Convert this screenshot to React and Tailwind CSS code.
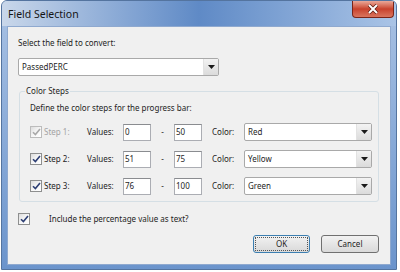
import { useState } from "react";

function Arrow() {
  return (
    <svg width="7" height="4" viewBox="0 0 7 4">
      <path d="M0 0 H7 L3.5 4 Z" fill="#1a1a1a" />
    </svg>
  );
}

function Check({ checked, disabled, onClick }) {
  return (
    <button
      type="button"
      onClick={onClick}
      className={
        "w-[12px] h-[12px] flex items-center justify-center border bg-linear-to-br from-[#dcdcdc] via-[#f6f6f6] to-[#ffffff] " +
        (disabled ? "border-[#bcbcbc]" : "border-[#8e8f8f]")
      }
    >
      {checked && (
        <svg width="9" height="8" viewBox="0 0 9 8">
          <path
            d="M1 4.2 L3.4 6.6 L8 1"
            fill="none"
            stroke={disabled ? "#a9a9a9" : "#2e3f74"}
            strokeWidth="1.6"
          />
        </svg>
      )}
    </button>
  );
}

function Combo({ value, width }) {
  return (
    <div
      className={
        "h-[18px] flex items-stretch border border-[#a9a9a9] rounded-[2px] bg-white " + width
      }
    >
      <div className="flex-1 flex items-center pl-[3px] text-[#1e1e1e]">{value}</div>
      <div className="w-[15px] flex items-center justify-center border-l border-[#e2e2e2] bg-linear-to-b from-[#f3f3f3] to-[#dbdbdb]">
        <Arrow />
      </div>
    </div>
  );
}

function ValueBox({ value }) {
  return (
    <div className="w-[28px] h-[17px] flex items-center pl-[1px] border border-[#abadb3] border-t-[#8a8c90] bg-white text-[#1e1e1e]">
      {value}
    </div>
  );
}

function StepRow({ step, from, to, color, disabled }) {
  const [on, setOn] = useState(true);
  return (
    <div className="h-[18px] flex items-center">
      <Check checked={on} disabled={disabled} onClick={() => !disabled && setOn(!on)} />
      <span className={"ml-[2px] w-[43px] " + (disabled ? "text-[#a3a3a3]" : "text-[#1e1e1e]")}>
        Step {step}:
      </span>
      <span className="w-[36px]">Values:</span>
      <ValueBox value={from} />
      <span className="w-[23px] text-center">-</span>
      <ValueBox value={to} />
      <span className="ml-[10px] w-[32px]">Color:</span>
      <Combo value={color} width="w-[128px]" />
    </div>
  );
}

export default function App() {
  const [includeText, setIncludeText] = useState(true);

  return (
    <div className="w-[400px] h-[272px] bg-white font-['Noto_Sans',sans-serif] text-[8px] leading-[12px] text-[#1e1e1e]">
      <div className="ml-[1px] w-[396px] h-[270px] flex flex-col rounded-t-[6px] border border-[#54749f] bg-linear-to-b from-[#a9c2e4] to-[#6b94cc] overflow-hidden">
        {/* TITLE BAR */}
        <div className="h-[25px] flex justify-between bg-linear-to-r from-[#c9d7ea] via-[#5f8ac6] to-[#aac4e6]">
          <div className="pl-[6px] pt-[6px] text-[10.5px] leading-[14px] text-[#141414]">Field Selection</div>
          <div className="mr-[2px] w-[42px] h-[17px] flex items-center justify-center rounded-b-[4px] border border-t-0 border-[#7a2418] bg-linear-to-b from-[#e9a899] via-[#c8412c] to-[#d9745e]">
            <svg width="12" height="10" viewBox="0 0 12 10">
              <path d="M2 1 L10 9 M10 1 L2 9" stroke="#5a1a10" strokeWidth="3.4" />
              <path d="M2 1 L10 9 M10 1 L2 9" stroke="#ffffff" strokeWidth="2" />
            </svg>
          </div>
        </div>

        {/* CONTENT */}
        <div className="mx-[5px] h-[239px] border border-[#8fa9cf] bg-[#f0f0f0] pl-[10px] pr-[11px] pt-[10px] flex flex-col">
          <div>Select the field to convert:</div>
          <div className="mt-[9px]">
            <Combo value="PassedPERC" width="w-[201px]" />
          </div>

          {/* COLOR STEPS GROUP */}
          <div className="relative mt-[15px] ml-[1px] border border-[#d5dfe5] rounded-[3px] pl-[10px] pt-[10px] pb-[6px]">
            <span className="absolute left-[5px] top-[-7px] px-[1px] bg-[#f0f0f0]">Color Steps</span>
            <div>Define the color steps for the progress bar:</div>
            <div className="mt-[9px] flex flex-col gap-[9px]">
              <StepRow step={1} from="0" to="50" color="Red" disabled />
              <StepRow step={2} from="51" to="75" color="Yellow" />
              <StepRow step={3} from="76" to="100" color="Green" />
            </div>
          </div>

          <div className="mt-[11px] h-[12px] flex items-center">
            <Check checked={includeText} onClick={() => setIncludeText(!includeText)} />
            <span className="ml-[19px]">Include the percentage value as text?</span>
          </div>

          <div className="mt-[10px] flex justify-end gap-[11px]">
            <button className="w-[57px] h-[18px] rounded-[3px] border border-[#3c7fb1] bg-linear-to-b from-[#f2f2f2] to-[#d9d9d9] p-[1px]">
              <div className="w-full h-full flex items-center justify-center border border-dotted border-[#555]">OK</div>
            </button>
            <button className="w-[58px] h-[18px] rounded-[3px] border border-[#707070] bg-linear-to-b from-[#f2f2f2] to-[#d9d9d9] flex items-center justify-center">
              Cancel
            </button>
          </div>
        </div>
      </div>
    </div>
  );
}
